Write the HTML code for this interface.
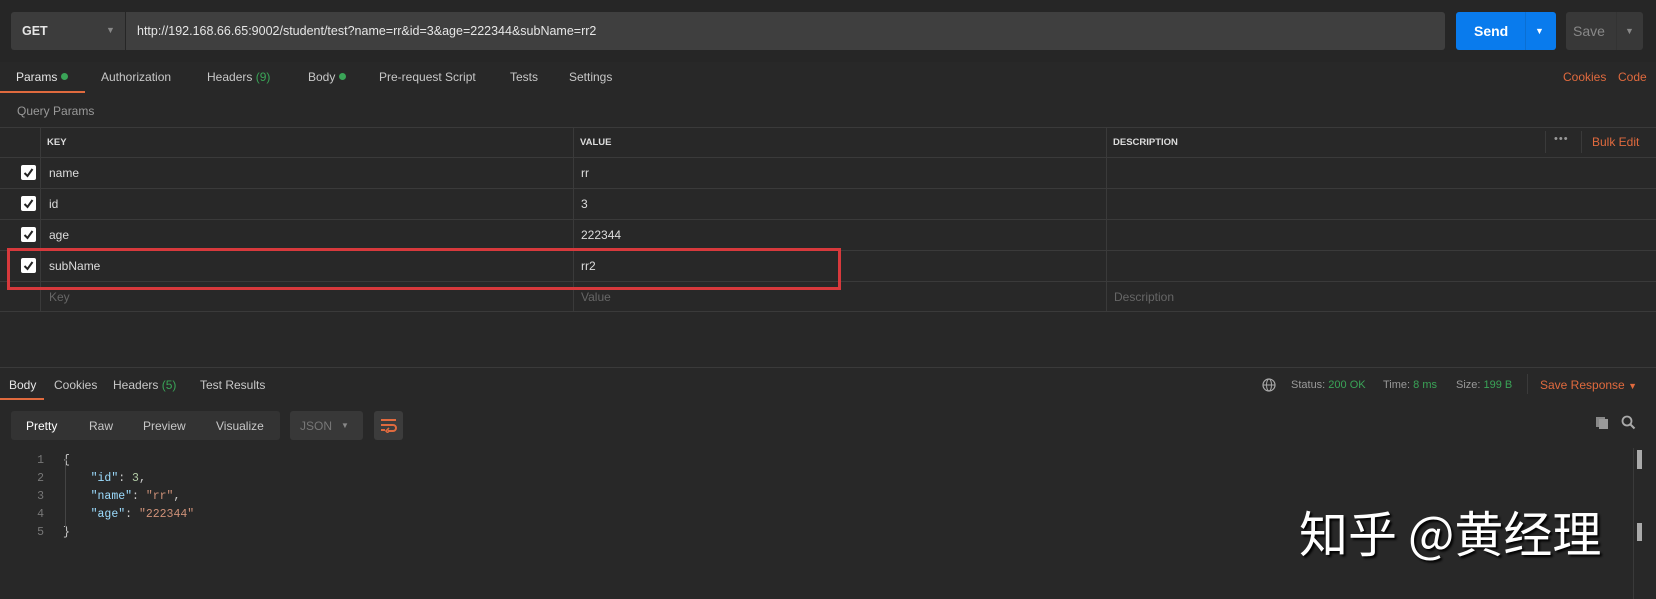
<!DOCTYPE html>
<html><head><meta charset="utf-8"><style>
*{box-sizing:border-box;margin:0;padding:0}
body{width:1656px;height:599px;background:#282828;font-family:"Liberation Sans","DejaVu Sans",sans-serif;font-size:12px;color:#c8c8c8;position:relative;overflow:hidden}
.a{position:absolute;white-space:nowrap}
.h{position:absolute;height:1px;background:#3a3a3a}
.v{position:absolute;width:1px;background:#3a3a3a}
.cb{position:absolute;left:21px;width:15px;height:15px;background:#fff;border-radius:2px}
.cb svg{position:absolute;left:2px;top:2px}
.or{color:#e06a3e}
.gr{color:#3aa457}
.dot{display:inline-block;width:7px;height:7px;border-radius:50%;background:#3aa457;margin-left:4px;vertical-align:1px}
.code{font-family:"Liberation Mono",monospace;font-size:11.5px}
</style></head><body>
<div class="a" style="left:0;top:0;width:1656px;height:62px;background:#262626"></div>
<!-- url bar -->
<div class="a" style="left:11px;top:12px;width:114px;height:38px;background:#3c3c3c;border-radius:3px 0 0 3px"></div>
<div class="a" style="left:22px;top:24px;font-weight:bold;color:#e6e6e6;font-size:12.5px">GET</div>
<div class="a" style="left:106px;top:25px;color:#888;font-size:9px">▼</div>
<div class="a" style="left:126px;top:12px;width:1319px;height:38px;background:#3f3f3f;border-radius:0 3px 3px 0"></div>
<div class="a" style="left:137px;top:24px;color:#e6e6e6;font-size:12.5px">http://192.168.66.65:9002/student/test?name=rr&amp;id=3&amp;age=222344&amp;subName=rr2</div>
<div class="a" style="left:1456px;top:12px;width:100px;height:38px;background:#097bed;border-radius:3px"></div>
<div class="a" style="left:1525px;top:12px;width:1px;height:38px;background:#0a6fd3"></div>
<div class="a" style="left:1474px;top:23px;color:#fff;font-weight:bold;font-size:14px">Send</div>
<div class="a" style="left:1535px;top:26px;color:#fff;font-size:9px">▼</div>
<div class="a" style="left:1566px;top:12px;width:77px;height:38px;background:#383838;border-radius:3px"></div>
<div class="a" style="left:1616px;top:12px;width:1px;height:38px;background:#333"></div>
<div class="a" style="left:1573px;top:23px;color:#888;font-size:14px">Save</div>
<div class="a" style="left:1625px;top:26px;color:#888;font-size:9px">▼</div>
<!-- tabs -->
<div class="a" style="left:16px;top:70px;color:#e6e6e6">Params<span class="dot"></span></div>
<div class="a" style="left:0;top:91px;width:85px;height:2px;background:#e06a3e"></div>
<div class="a" style="left:101px;top:70px">Authorization</div>
<div class="a" style="left:207px;top:70px">Headers <span class="gr">(9)</span></div>
<div class="a" style="left:308px;top:70px">Body<span class="dot"></span></div>
<div class="a" style="left:379px;top:70px">Pre-request Script</div>
<div class="a" style="left:510px;top:70px">Tests</div>
<div class="a" style="left:569px;top:70px">Settings</div>
<div class="a or" style="left:1563px;top:70px">Cookies</div>
<div class="a or" style="left:1618px;top:70px">Code</div>
<div class="a" style="left:17px;top:104px;color:#999">Query Params</div>
<!-- table -->
<div class="h" style="left:0;top:127px;width:1656px"></div>
<div class="h" style="left:0;top:157px;width:1656px"></div>
<div class="h" style="left:0;top:188px;width:1656px"></div>
<div class="h" style="left:0;top:219px;width:1656px"></div>
<div class="h" style="left:0;top:250px;width:1656px"></div>
<div class="h" style="left:0;top:281px;width:1656px"></div>
<div class="h" style="left:0;top:311px;width:1656px"></div>
<div class="v" style="left:40px;top:127px;height:184px"></div>
<div class="v" style="left:573px;top:127px;height:184px"></div>
<div class="v" style="left:1106px;top:127px;height:184px"></div>
<div class="v" style="left:1545px;top:131px;height:22px"></div>
<div class="v" style="left:1581px;top:131px;height:22px"></div>
<div class="a" style="left:47px;top:137px;font-size:9.5px;font-weight:bold;color:#ddd">KEY</div>
<div class="a" style="left:580px;top:137px;font-size:9.5px;font-weight:bold;color:#ddd">VALUE</div>
<div class="a" style="left:1113px;top:137px;font-size:9.5px;font-weight:bold;color:#ddd">DESCRIPTION</div>
<div class="a" style="left:1554px;top:133px;color:#999;font-size:11px;letter-spacing:1px">•••</div>
<div class="a or" style="left:1592px;top:135px">Bulk Edit</div>

<div class="cb" style="top:165px"><svg width="11" height="11"><path d="M1.5 6 L4.5 9 L9.5 2" stroke="#222" stroke-width="2" fill="none"/></svg></div>
<div class="cb" style="top:196px"><svg width="11" height="11"><path d="M1.5 6 L4.5 9 L9.5 2" stroke="#222" stroke-width="2" fill="none"/></svg></div>
<div class="cb" style="top:227px"><svg width="11" height="11"><path d="M1.5 6 L4.5 9 L9.5 2" stroke="#222" stroke-width="2" fill="none"/></svg></div>
<div class="cb" style="top:258px"><svg width="11" height="11"><path d="M1.5 6 L4.5 9 L9.5 2" stroke="#222" stroke-width="2" fill="none"/></svg></div>
<div class="a" style="left:49px;top:166px;color:#ddd">name</div>
<div class="a" style="left:581px;top:166px;color:#ddd">rr</div>
<div class="a" style="left:49px;top:197px;color:#ddd">id</div>
<div class="a" style="left:581px;top:197px;color:#ddd">3</div>
<div class="a" style="left:49px;top:228px;color:#ddd">age</div>
<div class="a" style="left:581px;top:228px;color:#ddd">222344</div>
<div class="a" style="left:49px;top:259px;color:#ddd">subName</div>
<div class="a" style="left:581px;top:259px;color:#ddd">rr2</div>
<div class="a" style="left:49px;top:290px;color:#666">Key</div>
<div class="a" style="left:581px;top:290px;color:#666">Value</div>
<div class="a" style="left:1114px;top:290px;color:#666">Description</div>
<div class="a" style="left:7px;top:248px;width:834px;height:42px;border:3px solid #d7393c"></div>
<!-- response -->
<div class="h" style="left:0;top:367px;width:1656px;background:#3a3a3a"></div>
<div class="a" style="left:9px;top:378px;color:#e6e6e6">Body</div>
<div class="a" style="left:0;top:398px;width:44px;height:2px;background:#e06a3e"></div>
<div class="a" style="left:54px;top:378px">Cookies</div>
<div class="a" style="left:113px;top:378px">Headers <span class="gr">(5)</span></div>
<div class="a" style="left:200px;top:378px">Test Results</div>
<svg class="a" style="left:1262px;top:378px" width="14" height="14" viewBox="0 0 14 14"><circle cx="7" cy="7" r="6" fill="none" stroke="#aaa" stroke-width="1.2"/><ellipse cx="7" cy="7" rx="2.5" ry="6" fill="none" stroke="#aaa" stroke-width="1"/><path d="M1 7h12" stroke="#aaa"/></svg>
<div class="a" style="left:1291px;top:379px;font-size:11px;color:#999">Status: <span class="gr">200 OK</span></div>
<div class="a" style="left:1383px;top:379px;font-size:11px;color:#999">Time: <span class="gr">8 ms</span></div>
<div class="a" style="left:1456px;top:379px;font-size:11px;color:#999">Size: <span class="gr">199 B</span></div>
<div class="v" style="left:1527px;top:374px;height:20px"></div>
<div class="a or" style="left:1540px;top:378px">Save Response <span style="font-size:9px">▼</span></div>
<!-- toolbar -->
<div class="a" style="left:11px;top:411px;width:269px;height:29px;background:#333;border-radius:3px"></div>
<div class="a" style="left:26px;top:419px;color:#fff">Pretty</div>
<div class="a" style="left:89px;top:419px">Raw</div>
<div class="a" style="left:143px;top:419px">Preview</div>
<div class="a" style="left:216px;top:419px">Visualize</div>
<div class="a" style="left:290px;top:411px;width:73px;height:29px;background:#383838;border-radius:3px"></div>
<div class="a" style="left:300px;top:419px;color:#777">JSON</div>
<div class="a" style="left:341px;top:421px;color:#888;font-size:8px">▼</div>
<div class="a" style="left:374px;top:411px;width:29px;height:29px;background:#3c3c3c;border-radius:3px"></div>
<svg class="a" style="left:380px;top:418px" width="17" height="15" viewBox="0 0 17 15"><path d="M1 2h15M1 7h12a3 3 0 0 1 0 6H8M1 12h4" stroke="#e06a3e" stroke-width="2" fill="none"/><path d="M9 10l-3 3 3 3" stroke="#e06a3e" stroke-width="1.6" fill="none"/></svg>
<svg class="a" style="left:1595px;top:416px" width="14" height="14"><rect x="1" y="1" width="9" height="10" fill="#888"/><rect x="4" y="3" width="9" height="10" fill="#999"/></svg>
<svg class="a" style="left:1621px;top:415px" width="15" height="15"><circle cx="6" cy="6" r="4.5" fill="none" stroke="#aaa" stroke-width="1.8"/><path d="M9.5 9.5l4 4" stroke="#aaa" stroke-width="2"/></svg>
<!-- code -->
<div class="a code" style="left:36px;top:452px;color:#777;line-height:18px;text-align:right;width:8px">1<br>2<br>3<br>4<br>5</div>
<div class="a code" style="left:63px;top:452px;line-height:18px;color:#ccc">{<br>&nbsp;&nbsp;&nbsp;&nbsp;<span style="color:#9cdcfe">"id"</span>: <span style="color:#b5cea8">3</span>,<br>&nbsp;&nbsp;&nbsp;&nbsp;<span style="color:#9cdcfe">"name"</span>: <span style="color:#ce9178">"rr"</span>,<br>&nbsp;&nbsp;&nbsp;&nbsp;<span style="color:#9cdcfe">"age"</span>: <span style="color:#ce9178">"222344"</span><br>}</div>
<div class="a" style="left:65px;top:455px;width:1px;height:72px;background:#444"></div>
<!-- scrollbar -->
<div class="v" style="left:1633px;top:448px;height:151px"></div>
<div class="a" style="left:1637px;top:450px;width:5px;height:19px;background:#aaa"></div>
<div class="a" style="left:1637px;top:523px;width:5px;height:18px;background:#aaa"></div>
<!-- watermark -->
<div class="a" style="left:1299px;top:496px;font-family:'Noto Sans CJK SC',sans-serif;font-size:49px;color:#fff;text-shadow:2px 2px 2px #000">知乎 @黄经理</div>
</body></html>
